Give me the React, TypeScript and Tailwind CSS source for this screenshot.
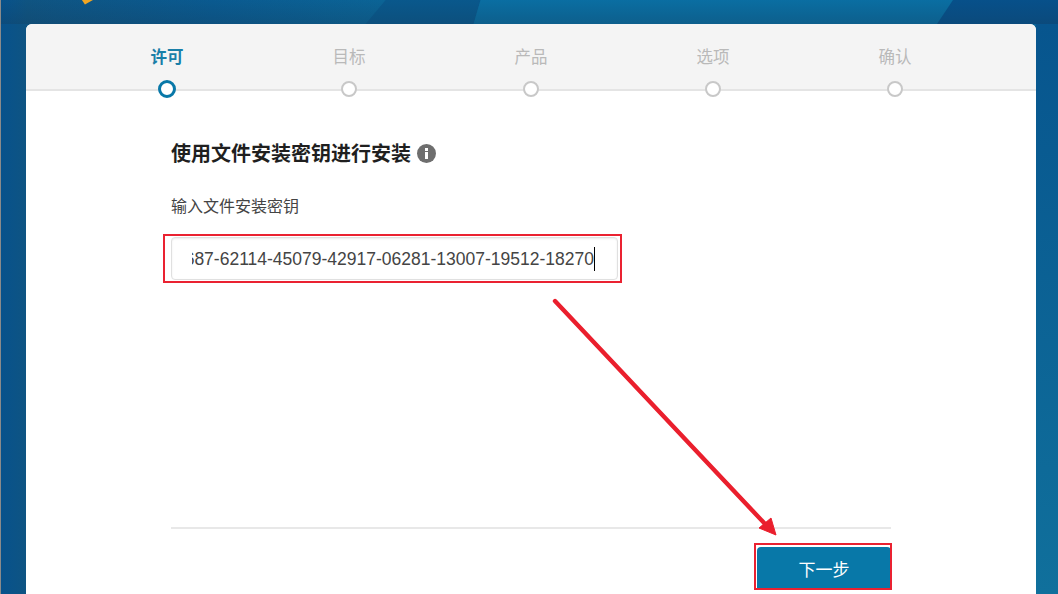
const font = { fontFamily: '"Noto Sans CJK SC", sans-serif' };

const steps = ["许可", "目标", "产品", "选项", "确认"];

function Stepper() {
  return (
    <div className="relative h-[67px] rounded-t-[6px] bg-[#f4f4f4] border-b-2 border-[#e4e4e4] pl-[50px] flex">
      {steps.map((s, i) => (
        <div key={s} className="relative w-[182px] flex justify-center">
          <span
            className={
              i === 0
                ? "mt-[22px] h-5 text-[16.5px] leading-5 font-bold text-[#1a7fa8]"
                : "mt-[22px] h-5 text-[16.5px] leading-5 text-[#b9b9b9]"
            }
          >
            {s}
          </span>
          <span
            className={
              i === 0
                ? "absolute left-[82px] top-[56px] w-[18px] h-[18px] rounded-full bg-white border-[3px] border-[#0878a8]"
                : "absolute left-[83px] top-[57px] w-4 h-4 rounded-full bg-white border-[2.5px] border-[#c8c8c8]"
            }
          />
        </div>
      ))}
    </div>
  );
}

function Background() {
  return (
    <svg className="absolute inset-0 w-full h-full" viewBox="0 0 1058 594" preserveAspectRatio="none">
      <defs>
        <linearGradient id="bg" x1="0" y1="0" x2="1" y2="0">
          <stop offset="0" stopColor="#07528c" />
          <stop offset="0.025" stopColor="#0f5482" />
          <stop offset="0.2" stopColor="#0a5a90" />
          <stop offset="0.36" stopColor="#0b6496" />
          <stop offset="1" stopColor="#0b6496" />
        </linearGradient>
        <linearGradient id="bgR" x1="0" y1="0" x2="0" y2="1">
          <stop offset="0" stopColor="#07558e" />
          <stop offset="1" stopColor="#10709c" />
        </linearGradient>
        <linearGradient id="shade" x1="0" y1="0" x2="0" y2="1">
          <stop offset="0" stopColor="#143c5a" stopOpacity="0" />
          <stop offset="1" stopColor="#143c5a" stopOpacity="0.3" />
        </linearGradient>
      </defs>
      <rect width="1058" height="594" fill="url(#bg)" />
      <polygon points="365,24 385,0 480,0 473,24" fill="#09588c" />
      <polygon points="473,24 480,0 953,0 937,24" fill="#0a6ea2" />
      <polygon points="937,24 953,0 1058,0 1058,24" fill="#07508a" />
      <rect x="0" y="0" width="1058" height="24" fill="url(#shade)" />
      <rect x="1036" y="24" width="22" height="570" fill="url(#bgR)" />
      <polygon points="81,0 92,0 84,4.5" fill="#f2a623" />
    </svg>
  );
}

function Arrow() {
  return (
    <svg className="absolute left-[540px] top-[290px] pointer-events-none" width="250" height="255" viewBox="540 290 250 255">
      <line x1="554" y1="301" x2="765" y2="525" stroke="#ea1f2d" strokeWidth="4.4" strokeLinecap="round" />
      <polygon points="775,535 758,528 770,518" fill="#ea1f2d" stroke="#ea1f2d" strokeWidth="1" />
    </svg>
  );
}

export default function App() {
  return (
    <div className="relative h-[594px] w-[1058px] overflow-hidden border-l border-[#8a8a8a] text-[#333]" style={font}>
      <Background />
      <div className="relative ml-[25px] mt-[24px] w-[1010px] h-[570px] rounded-t-[6px] bg-white">
        <Stepper />
        <div className="pl-[145px] pr-[145px]">
          <div className="mt-[48px] flex items-center gap-[6px] h-7">
            <h1 className="text-[20px] leading-7 font-bold text-[#1f1f1f]">使用文件安装密钥进行安装</h1>
            <span className="w-[19px] h-[19px] rounded-full bg-[#6e6e6e] text-white flex items-center justify-center">
              <svg width="19" height="19" viewBox="0 0 19 19">
                <rect x="8" y="4" width="3" height="3" fill="#fff" />
                <rect x="8" y="8" width="3" height="7" fill="#fff" />
              </svg>
            </span>
          </div>
          <div className="mt-[27px] text-[16px] leading-[22px] text-[#444]">输入文件安装密钥</div>
          <div className="relative mt-[21px] w-[447px] h-[43px] rounded-[4px] border border-[#e0e0e0] bg-white shadow-[inset_0_1px_2px_rgba(0,0,0,0.08)] pl-[20px] pr-[22px] flex items-center">
            <div
              className="w-full overflow-hidden flex justify-end whitespace-nowrap text-[17.5px] leading-[24px] text-[#444]"
              style={{ fontFamily: '"Liberation Sans", sans-serif' }}
            >
              <span className="border-r border-black">
                7687-62114-45079-42917-06281-13007-19512-18270
              </span>
            </div>
            <div className="absolute -left-[9px] -top-[4px] w-[459px] h-[49px] border-2 border-[#ea2231]" />
          </div>
          <div className="mt-[247px] h-[2px] bg-[#e8e8e8]" />
          <div className="relative mt-[18px] flex justify-end">
            <button className="w-[134px] h-[43px] rounded-t-[4px] bg-[#0878a8] text-white text-[17px] leading-[43px]">
              下一步
            </button>
            <div className="absolute -right-[1px] -top-[4px] w-[138px] h-[47px] border-2 border-[#ea2231]" />
          </div>
        </div>
      </div>
      <Arrow />
    </div>
  );
}
